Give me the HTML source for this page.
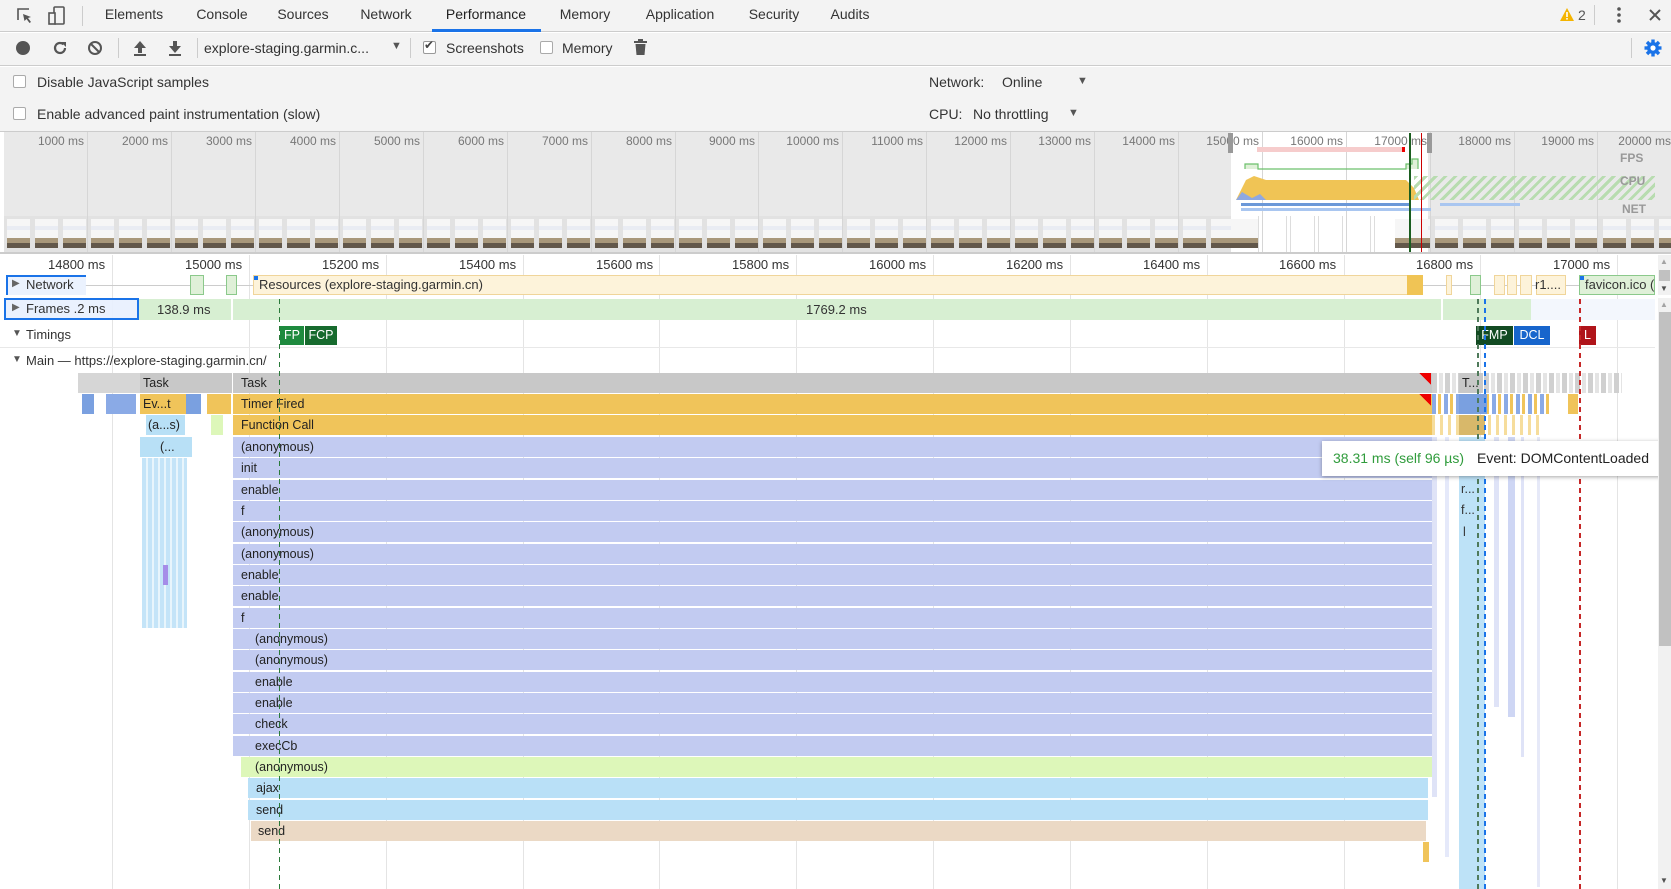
<!DOCTYPE html>
<html><head><meta charset="utf-8"><style>
*{box-sizing:border-box;margin:0;padding:0}
body{width:1671px;height:889px;overflow:hidden;background:#fff;font-family:"Liberation Sans",Arial,sans-serif;font-size:13px;color:#333;position:relative}
.a{position:absolute}
.t{position:absolute;white-space:nowrap}
.tab{position:absolute;top:6px;font-size:14px;color:#333;transform:translateX(-50%)}
.cb{position:absolute;width:13px;height:13px;border:1px solid #aaa;border-radius:2px;background:#fff}
.r{position:absolute;height:20px;font-size:12.5px;line-height:20px;color:#222;overflow:hidden;white-space:nowrap}
.gl{position:absolute;top:255px;bottom:0;width:1px;background:#e4e4e4}
.og{position:absolute;top:132px;height:121px;width:1px;background:#d6d6d6}
.ot{position:absolute;top:134px;font-size:12px;color:#777;text-align:right;width:80px}
</style></head><body>
<!-- tab bar -->
<div class="a" style="left:0;top:0;width:1671px;height:32px;background:#f3f3f3;border-bottom:1px solid #ccc"></div>
<svg class="a" style="left:15px;top:6px" width="20" height="20" viewBox="0 0 20 20"><path d="M3 14V3h11" fill="none" stroke="#555" stroke-width="1.6"/><path d="M8 8l8 3-3 1 3 4-1.5 1-3-4-2 2z" fill="#555"/></svg>
<svg class="a" style="left:46px;top:5px" width="22" height="22" viewBox="0 0 22 22"><rect x="8" y="2" width="10" height="17" rx="1" fill="none" stroke="#555" stroke-width="1.6"/><rect x="3" y="8" width="6" height="11" fill="#f3f3f3" stroke="#555" stroke-width="1.6"/></svg>
<div class="a" style="left:82px;top:6px;width:1px;height:20px;background:#ccc"></div>
<div class="tab" style="left:134px">Elements</div>
<div class="tab" style="left:222px">Console</div>
<div class="tab" style="left:303px">Sources</div>
<div class="tab" style="left:386px">Network</div>
<div class="tab" style="left:486px;color:#222">Performance</div>
<div class="a" style="left:432px;top:29px;width:109px;height:3px;background:#1a73e8"></div>
<div class="tab" style="left:585px">Memory</div>
<div class="tab" style="left:680px">Application</div>
<div class="tab" style="left:774px">Security</div>
<div class="tab" style="left:850px">Audits</div>
<svg class="a" style="left:1560px;top:8px" width="14" height="13" viewBox="0 0 14 13"><path d="M7 0L14 13H0z" fill="#f4b400"/><rect x="6.2" y="4" width="1.6" height="5" fill="#fff"/><rect x="6.2" y="10" width="1.6" height="1.6" fill="#fff"/></svg>
<div class="t" style="left:1578px;top:7px;font-size:14px;color:#555">2</div>
<div class="a" style="left:1594px;top:5px;width:1px;height:20px;background:#ccc"></div>
<svg class="a" style="left:1615px;top:6px" width="8" height="20"><circle cx="4" cy="3" r="1.8" fill="#555"/><circle cx="4" cy="9" r="1.8" fill="#555"/><circle cx="4" cy="15" r="1.8" fill="#555"/></svg>
<svg class="a" style="left:1648px;top:8px" width="14" height="14"><path d="M2 2L12 12M12 2L2 12" stroke="#555" stroke-width="2"/></svg>
<!-- toolbar -->
<div class="a" style="left:0;top:33px;width:1671px;height:33px;background:#f3f3f3;border-bottom:1px solid #ccc"></div>
<div class="a" style="left:16px;top:41px;width:14px;height:14px;border-radius:50%;background:#555"></div>
<svg class="a" style="left:52px;top:40px" width="16" height="16" viewBox="0 0 16 16"><path d="M13 8a5 5 0 1 1-1.5-3.6" fill="none" stroke="#555" stroke-width="2.2"/><path d="M9 2h5v5z" fill="#555"/></svg>
<svg class="a" style="left:87px;top:40px" width="16" height="16" viewBox="0 0 16 16"><circle cx="8" cy="8" r="6" fill="none" stroke="#555" stroke-width="2"/><path d="M4 4l8 8" stroke="#555" stroke-width="2"/></svg>
<div class="a" style="left:118px;top:38px;width:1px;height:20px;background:#ccc"></div>
<svg class="a" style="left:133px;top:40px" width="14" height="16" viewBox="0 0 14 16"><path d="M7 1L13 8H9v5H5V8H1z" fill="#555"/><rect x="1" y="14" width="12" height="2" fill="#555"/></svg>
<svg class="a" style="left:168px;top:40px" width="14" height="16" viewBox="0 0 14 16"><path d="M7 13L13 6H9V1H5v5H1z" fill="#555"/><rect x="1" y="14" width="12" height="2" fill="#555"/></svg>
<div class="a" style="left:197px;top:38px;width:1px;height:20px;background:#ccc"></div>
<div class="t" style="left:204px;top:40px;font-size:14px;color:#333">explore-staging.garmin.c...</div>
<div class="t" style="left:391px;top:40px;font-size:11px;color:#555">▼</div>
<div class="a" style="left:410px;top:38px;width:1px;height:20px;background:#ccc"></div>
<div class="cb" style="left:423px;top:41px;border-color:#999"></div><div class="t" style="left:424px;top:38px;font-size:12px;color:#444">✔</div>
<div class="t" style="left:446px;top:40px;font-size:14px">Screenshots</div>
<div class="cb" style="left:540px;top:41px"></div>
<div class="t" style="left:562px;top:40px;font-size:14px">Memory</div>
<svg class="a" style="left:634px;top:39px" width="13" height="16" viewBox="0 0 13 16"><rect x="0" y="2" width="13" height="2" fill="#555"/><rect x="4" y="0" width="5" height="2" fill="#555"/><path d="M1.5 5h10l-1 11h-8z" fill="#555"/></svg>
<div class="a" style="left:1631px;top:38px;width:1px;height:20px;background:#ccc"></div>
<svg class="a" style="left:1644px;top:39px" width="18" height="18" viewBox="0 0 18 18"><g fill="#1a73e8"><circle cx="9" cy="9" r="6"/><rect x="7.3" y="0.5" width="3.4" height="17"/><rect x="0.5" y="7.3" width="17" height="3.4"/><rect x="7.3" y="0.5" width="3.4" height="17" transform="rotate(45 9 9)"/><rect x="7.3" y="0.5" width="3.4" height="17" transform="rotate(-45 9 9)"/></g><circle cx="9" cy="9" r="2.6" fill="#fff"/></svg>
<!-- settings -->
<div class="a" style="left:0;top:67px;width:1671px;height:65px;background:#f3f3f3;border-bottom:1px solid #ccc"></div>
<div class="cb" style="left:13px;top:75px"></div>
<div class="t" style="left:37px;top:74px;font-size:14px">Disable JavaScript samples</div>
<div class="cb" style="left:13px;top:107px"></div>
<div class="t" style="left:37px;top:106px;font-size:14px">Enable advanced paint instrumentation (slow)</div>
<div class="t" style="left:929px;top:74px;font-size:14px">Network:</div>
<div class="t" style="left:1002px;top:74px;font-size:14px">Online</div>
<div class="t" style="left:1077px;top:75px;font-size:11px;color:#555">▼</div>
<div class="t" style="left:929px;top:106px;font-size:14px">CPU:</div>
<div class="t" style="left:973px;top:106px;font-size:14px">No throttling</div>
<div class="t" style="left:1068px;top:107px;font-size:11px;color:#555">▼</div>
<!-- overview -->
<div class="a" style="left:4px;top:132px;width:1667px;height:121px;background:#e9e9e9"></div>
<div class="a" style="left:1231px;top:132px;width:197px;height:121px;background:#fff"></div>
<div class="a" style="left:4px;top:216px;width:1667px;height:37px;background:repeating-linear-gradient(to right,#e2e2e2 0 3px,transparent 3px 26px,#e2e2e2 26px 28px),linear-gradient(to bottom,#e2e2e2 0 3px,#f6f6f6 3px 10px,#e9ecf3 10px 14px,#f6f6f6 14px 22px,#a8977a 22px 27px,#62574a 27px 32px,#e2e2e2 32px)"></div>
<div class="a" style="left:1231px;top:216px;width:197px;height:37px;background:repeating-linear-gradient(to right,#fff 0 3px,#ddd 3px 4px,#fff 4px 27px,#ddd 27px 28px)"></div>
<div class="a" style="left:1231px;top:216px;width:27px;height:37px;background:linear-gradient(to bottom,#fff 0 3px,#f6f6f6 3px 22px,#a8977a 22px 27px,#62574a 27px 32px,#fff 32px)"></div>
<div class="a" style="left:1395px;top:216px;width:33px;height:37px;background:linear-gradient(to bottom,#fff 0 3px,#f6f6f6 3px 22px,#a8977a 22px 27px,#62574a 27px 32px,#fff 32px)"></div>
<div class="og" style="left:87px"></div><div class="og" style="left:171px"></div><div class="og" style="left:255px"></div><div class="og" style="left:339px"></div><div class="og" style="left:423px"></div><div class="og" style="left:507px"></div><div class="og" style="left:591px"></div><div class="og" style="left:675px"></div><div class="og" style="left:758px"></div><div class="og" style="left:842px"></div><div class="og" style="left:926px"></div><div class="og" style="left:1010px"></div><div class="og" style="left:1094px"></div><div class="og" style="left:1178px"></div><div class="og" style="left:1262px"></div><div class="og" style="left:1346px"></div><div class="og" style="left:1430px"></div><div class="og" style="left:1514px"></div><div class="og" style="left:1597px"></div>
<div class="ot" style="left:4px">1000 ms</div><div class="ot" style="left:88px">2000 ms</div><div class="ot" style="left:172px">3000 ms</div><div class="ot" style="left:256px">4000 ms</div><div class="ot" style="left:340px">5000 ms</div><div class="ot" style="left:424px">6000 ms</div><div class="ot" style="left:508px">7000 ms</div><div class="ot" style="left:592px">8000 ms</div><div class="ot" style="left:675px">9000 ms</div><div class="ot" style="left:759px">10000 ms</div><div class="ot" style="left:843px">11000 ms</div><div class="ot" style="left:927px">12000 ms</div><div class="ot" style="left:1011px">13000 ms</div><div class="ot" style="left:1095px">14000 ms</div><div class="ot" style="left:1179px">15000 ms</div><div class="ot" style="left:1263px">16000 ms</div><div class="ot" style="left:1347px">17000 ms</div><div class="ot" style="left:1431px">18000 ms</div><div class="ot" style="left:1514px">19000 ms</div><div class="ot" style="left:1591px">20000 ms</div>
<div class="a" style="left:1228px;top:133px;width:5px;height:20px;background:#999"></div>
<div class="a" style="left:1427px;top:133px;width:5px;height:20px;background:#999"></div>
<div class="a" style="left:1257px;top:147px;width:147px;height:5px;background:#f6cccc"></div>
<div class="a" style="left:1402px;top:147px;width:3px;height:5px;background:#e00"></div>
<svg class="a" style="left:1231px;top:156px" width="200" height="100"><path d="M14 13V8h13v5h148v-5h6v-5h6v10" fill="#dff0d8" stroke="#6cc06c" stroke-width="1.2"/><path d="M5 44l10-20 8-4 12 4h140l8 8 5 12z" fill="#f0c455"/><path d="M5 44l6-8 10 6 8-4 6 6z" fill="#8fa8e0"/><rect x="10" y="47" width="168" height="3" fill="#6b98d8"/><rect x="10" y="52" width="196" height="3" fill="#a9c6f0"/></svg>
<div class="a" style="left:1414px;top:176px;width:241px;height:24px;background:repeating-linear-gradient(135deg,#b8dcb0 0 3px,transparent 3px 7px)"></div>
<div class="a" style="left:1440px;top:203px;width:80px;height:3px;background:#a9c6f0"></div>
<div class="t" style="left:1620px;top:151px;font-size:12px;font-weight:bold;color:#999">FPS</div>
<div class="t" style="left:1620px;top:174px;font-size:12px;font-weight:bold;color:#999">CPU</div>
<div class="t" style="left:1622px;top:202px;font-size:12px;font-weight:bold;color:#999">NET</div>
<div class="a" style="left:1409px;top:133px;width:2px;height:120px;background:#1b5e20"></div>
<div class="a" style="left:1421px;top:133px;width:1px;height:120px;background:#c00"></div>
<div class="a" style="left:0;top:252px;width:1671px;height:2px;background:#ccc"></div>
<!-- flame ruler & grid -->
<div class="gl" style="left:112px"></div><div class="gl" style="left:249px"></div><div class="gl" style="left:386px"></div><div class="gl" style="left:523px"></div><div class="gl" style="left:659px"></div><div class="gl" style="left:796px"></div><div class="gl" style="left:933px"></div><div class="gl" style="left:1070px"></div><div class="gl" style="left:1207px"></div><div class="gl" style="left:1344px"></div><div class="gl" style="left:1480px"></div><div class="gl" style="left:1617px"></div>
<div class="t" style="left:48px;top:257px;font-size:13px">14800 ms</div><div class="t" style="left:185px;top:257px;font-size:13px">15000 ms</div><div class="t" style="left:322px;top:257px;font-size:13px">15200 ms</div><div class="t" style="left:459px;top:257px;font-size:13px">15400 ms</div><div class="t" style="left:596px;top:257px;font-size:13px">15600 ms</div><div class="t" style="left:732px;top:257px;font-size:13px">15800 ms</div><div class="t" style="left:869px;top:257px;font-size:13px">16000 ms</div><div class="t" style="left:1006px;top:257px;font-size:13px">16200 ms</div><div class="t" style="left:1143px;top:257px;font-size:13px">16400 ms</div><div class="t" style="left:1279px;top:257px;font-size:13px">16600 ms</div><div class="t" style="left:1416px;top:257px;font-size:13px">16800 ms</div><div class="t" style="left:1553px;top:257px;font-size:13px">17000 ms</div>
<!-- network row -->
<div class="a" style="left:85px;top:285px;width:1530px;height:1px;background:#ccc"></div>
<div class="a" style="left:190px;top:275px;width:14px;height:20px;background:#dff0d8;border:1px solid #8bc98b"></div>
<div class="a" style="left:226px;top:275px;width:11px;height:20px;background:#dff0d8;border:1px solid #8bc98b"></div>
<div class="a" style="left:253px;top:275px;width:1170px;height:20px;background:#fdf3da;border:1px solid #f0d59a"></div>
<div class="a" style="left:254px;top:276px;width:4px;height:4px;background:#1a73e8"></div>
<div class="t" style="left:259px;top:277px;font-size:13px;color:#333">Resources (explore-staging.garmin.cn)</div>
<div class="a" style="left:1407px;top:275px;width:16px;height:20px;background:#f0c455"></div>
<div class="a" style="left:1446px;top:275px;width:6px;height:20px;background:#fdf3da;border:1px solid #f0d59a"></div>
<div class="a" style="left:1470px;top:275px;width:11px;height:20px;background:#dff0d8;border:1px solid #8bc98b"></div>
<div class="a" style="left:1494px;top:275px;width:11px;height:20px;background:#fdf3da;border:1px solid #f0d59a"></div>
<div class="a" style="left:1507px;top:275px;width:10px;height:20px;background:#fdf3da;border:1px solid #f0d59a"></div>
<div class="a" style="left:1520px;top:275px;width:12px;height:20px;background:#fdf3da;border:1px solid #f0d59a"></div>
<div class="a" style="left:1536px;top:275px;width:30px;height:20px;background:#fdf3da;border:1px solid #f0d59a"></div>
<div class="t" style="left:1535px;top:277px;font-size:13px">r1....</div>
<div class="a" style="left:1579px;top:275px;width:76px;height:20px;background:#dff0d8;border:1px solid #8bc98b"></div>
<div class="a" style="left:1580px;top:276px;width:4px;height:4px;background:#1a73e8"></div>
<div class="t" style="left:1585px;top:277px;font-size:13px">favicon.ico (</div>
<div class="a" style="left:6px;top:275px;width:80px;height:20px;background:rgba(232,240,254,.85);border:2px solid #1a73e8;border-right:none;border-bottom:none"></div>
<div class="t" style="left:12px;top:278px;font-size:10px;color:#666">▶</div>
<div class="t" style="left:26px;top:277px;font-size:13px">Network</div>
<!-- frames -->
<div class="a" style="left:139px;top:299px;width:92px;height:21px;background:#d7efd2"></div>
<div class="a" style="left:233px;top:299px;width:1208px;height:21px;background:#d7efd2"></div>
<div class="a" style="left:1443px;top:299px;width:88px;height:21px;background:#d7efd2"></div>
<div class="a" style="left:1531px;top:299px;width:124px;height:21px;background:#f3f7fd"></div>
<div class="t" style="left:157px;top:302px;font-size:13px">138.9 ms</div>
<div class="t" style="left:806px;top:302px;font-size:13px">1769.2 ms</div>
<div class="a" style="left:4px;top:298px;width:135px;height:22px;background:rgba(232,240,254,.9);border:2px solid #1a73e8"></div>
<div class="t" style="left:12px;top:302px;font-size:10px;color:#666">▶</div>
<div class="t" style="left:26px;top:301px;font-size:13px">Frames .2 ms</div>
<!-- timings -->
<div class="a" style="left:0;top:347px;width:1655px;height:1px;background:#e8e8e8"></div>
<div class="t" style="left:12px;top:328px;font-size:10px;color:#555">▼</div>
<div class="t" style="left:26px;top:327px;font-size:13px">Timings</div>
<div class="a" style="left:280px;top:326px;width:24px;height:19px;background:#1e8a3e;color:#fff;font-size:12.5px;line-height:19px;text-align:center">FP</div>
<div class="a" style="left:305px;top:326px;width:32px;height:19px;background:#176b2e;color:#fff;font-size:12.5px;line-height:19px;text-align:center">FCP</div>
<div class="a" style="left:1476px;top:326px;width:37px;height:19px;background:#124a22;color:#fff;font-size:12.5px;line-height:19px;text-align:center">FMP</div>
<div class="a" style="left:1514px;top:326px;width:36px;height:19px;background:#1765cc;color:#fff;font-size:12.5px;line-height:19px;text-align:center">DCL</div>
<div class="a" style="left:1579px;top:326px;width:17px;height:19px;background:#b0141a;color:#fff;font-size:12.5px;line-height:19px;text-align:center">L</div>
<!-- main -->
<div class="t" style="left:12px;top:354px;font-size:10px;color:#555">▼</div>
<div class="t" style="left:26px;top:353px;font-size:13px">Main — https://explore-staging.garmin.cn/</div>
<!-- left small bars -->
<div class="a" style="left:78px;top:373px;width:62px;height:20px;background:#d6d6d6"></div>
<div class="r" style="left:140px;top:373px;width:92px;background:#c8c8c8;padding-left:3px">Task</div>
<div class="a" style="left:82px;top:394px;width:12px;height:20px;background:#7aa0e0"></div>
<div class="a" style="left:106px;top:394px;width:30px;height:20px;background:#8aaae6"></div>
<div class="r" style="left:140px;top:394px;width:46px;background:#f0c45a;padding-left:3px">Ev...t</div>
<div class="a" style="left:186px;top:394px;width:15px;height:20px;background:#7aa0e0"></div>
<div class="a" style="left:207px;top:394px;width:24px;height:20px;background:#f0c45a"></div>
<div class="r" style="left:146px;top:415px;width:39px;background:#b8e0f6;padding-left:2px">(a...s)</div>
<div class="a" style="left:211px;top:415px;width:12px;height:20px;background:#ddf7b9"></div>
<div class="r" style="left:140px;top:437px;width:52px;background:#b8e0f6;padding-left:20px">(...</div>
<div class="a" style="left:142px;top:458px;width:45px;height:170px;background:repeating-linear-gradient(to right,#c4e4f8 0 4px,#e8f5fc 4px 6px)"></div>
<div class="a" style="left:163px;top:565px;width:5px;height:20px;background:#a58de8"></div>
<!-- main columns -->
<div class="r" style="left:233px;top:373px;width:1199px;background:#c8c8c8;padding-left:8px">Task</div>
<div class="r" style="left:233px;top:394px;width:1199px;background:#f0c45a;padding-left:8px">Timer Fired</div>
<div class="r" style="left:233px;top:415px;width:1199px;background:#f0c45a;padding-left:8px">Function Call</div>
<div class="r" style="left:233px;top:437px;width:1199px;background:#c2cbf1;padding-left:8px">(anonymous)</div>
<div class="r" style="left:233px;top:458px;width:1199px;background:#c2cbf1;padding-left:8px">init</div>
<div class="r" style="left:233px;top:480px;width:1199px;background:#c2cbf1;padding-left:8px">enable</div>
<div class="r" style="left:233px;top:501px;width:1199px;background:#c2cbf1;padding-left:8px">f</div>
<div class="r" style="left:233px;top:522px;width:1199px;background:#c2cbf1;padding-left:8px">(anonymous)</div>
<div class="r" style="left:233px;top:544px;width:1199px;background:#c2cbf1;padding-left:8px">(anonymous)</div>
<div class="r" style="left:233px;top:565px;width:1199px;background:#c2cbf1;padding-left:8px">enable</div>
<div class="r" style="left:233px;top:586px;width:1199px;background:#c2cbf1;padding-left:8px">enable</div>
<div class="r" style="left:233px;top:608px;width:1199px;background:#c2cbf1;padding-left:8px">f</div>
<div class="r" style="left:233px;top:629px;width:1199px;background:#c2cbf1;padding-left:22px">(anonymous)</div>
<div class="r" style="left:233px;top:650px;width:1199px;background:#c2cbf1;padding-left:22px">(anonymous)</div>
<div class="r" style="left:233px;top:672px;width:1199px;background:#c2cbf1;padding-left:22px">enable</div>
<div class="r" style="left:233px;top:693px;width:1199px;background:#c2cbf1;padding-left:22px">enable</div>
<div class="r" style="left:233px;top:714px;width:1199px;background:#c2cbf1;padding-left:22px">check</div>
<div class="r" style="left:233px;top:736px;width:1199px;background:#c2cbf1;padding-left:22px">execCb</div>
<div class="r" style="left:241px;top:757px;width:1191px;background:#ddf7b9;padding-left:14px">(anonymous)</div>
<div class="r" style="left:248px;top:778px;width:1180px;background:#b9e0f7;padding-left:8px">ajax</div>
<div class="r" style="left:248px;top:800px;width:1180px;background:#b9e0f7;padding-left:8px">send</div>
<div class="r" style="left:251px;top:821px;width:1175px;background:#ebd9c5;padding-left:7px">send</div>
<div class="a" style="left:1423px;top:842px;width:6px;height:20px;background:#f0c45a"></div>
<div class="a" style="left:1419px;top:373px;width:12px;height:12px;background:linear-gradient(225deg,#e00 50%,transparent 50%)"></div>
<div class="a" style="left:1419px;top:394px;width:12px;height:12px;background:linear-gradient(225deg,#e00 50%,transparent 50%)"></div>
<!-- right cluster -->
<div class="a" style="left:1432px;top:373px;width:190px;height:20px;background:repeating-linear-gradient(to right,#d0d0d0 0 5px,#fff 5px 7px,#e4e4e4 7px 11px,#fff 11px 13px)"></div>
<div class="r" style="left:1459px;top:373px;width:24px;background:#c8c8c8;padding-left:3px">T...</div>
<div class="a" style="left:1432px;top:394px;width:120px;height:20px;background:repeating-linear-gradient(to right,#8aaae6 0 4px,#fff 4px 6px,#f0c45a 6px 9px,#fff 9px 12px)"></div>
<div class="a" style="left:1459px;top:394px;width:28px;height:20px;background:#7aa0e0"></div>
<div class="a" style="left:1568px;top:394px;width:10px;height:20px;background:#f0c45a"></div>
<div class="a" style="left:1432px;top:415px;width:110px;height:20px;background:repeating-linear-gradient(to right,#f6dd9c 0 3px,#fff 3px 8px)"></div>
<div class="a" style="left:1459px;top:415px;width:26px;height:20px;background:#d8b86a"></div>
<div class="a" style="left:1459px;top:437px;width:26px;height:452px;background:#bde2f7"></div>
<div class="a" style="left:1432px;top:437px;width:5px;height:360px;background:#dfe3f7"></div>
<div class="a" style="left:1445px;top:437px;width:4px;height:420px;background:#e5e9fa"></div>
<div class="a" style="left:1494px;top:437px;width:5px;height:270px;background:#dfe3f7"></div>
<div class="a" style="left:1508px;top:437px;width:7px;height:280px;background:#ced6f4"></div>
<div class="a" style="left:1521px;top:437px;width:3px;height:320px;background:#dfe3f7"></div>
<div class="a" style="left:1537px;top:437px;width:3px;height:450px;background:#e6e9f8"></div>
<div class="t" style="left:1461px;top:482px;font-size:12.5px">r...</div>
<div class="t" style="left:1461px;top:503px;font-size:12.5px">f...</div>
<div class="t" style="left:1463px;top:525px;font-size:12.5px">l</div>
<!-- dashed lines -->
<div class="a" style="left:279px;top:299px;width:1px;height:590px;background:repeating-linear-gradient(to bottom,#2a7a3a 0 5px,transparent 5px 9px)"></div>
<div class="a" style="left:1477px;top:299px;width:2px;height:590px;background:repeating-linear-gradient(to bottom,#4f7a5a 0 5px,transparent 5px 9px)"></div>
<div class="a" style="left:1484px;top:299px;width:2px;height:590px;background:repeating-linear-gradient(to bottom,#1a73e8 0 5px,transparent 5px 9px)"></div>
<div class="a" style="left:1579px;top:299px;width:2px;height:590px;background:repeating-linear-gradient(to bottom,#c62828 0 5px,transparent 5px 9px)"></div>
<!-- tooltip -->
<div class="a" style="left:1322px;top:441px;width:349px;height:35px;background:#fff;box-shadow:0 1px 4px rgba(0,0,0,.35)"></div>
<div class="t" style="left:1333px;top:450px;font-size:14px;color:#309c3c">38.31 ms (self 96 µs)</div>
<div class="t" style="left:1477px;top:450px;font-size:14px;color:#222">Event: DOMContentLoaded</div>
<!-- scrollbars -->
<div class="a" style="left:1658px;top:255px;width:13px;height:40px;background:#f1f1f1"></div>
<div class="a" style="left:1659px;top:270px;width:11px;height:11px;background:#c1c1c1"></div>
<div class="t" style="left:1660px;top:257px;font-size:8px;color:#a3a3a3">▲</div>
<div class="t" style="left:1660px;top:284px;font-size:8px;color:#505050">▼</div>
<div class="a" style="left:1658px;top:298px;width:13px;height:591px;background:#f1f1f1"></div>
<div class="t" style="left:1660px;top:300px;font-size:8px;color:#a3a3a3">▲</div>
<div class="a" style="left:1659px;top:312px;width:12px;height:334px;background:#c1c1c1"></div>
<div class="t" style="left:1660px;top:876px;font-size:8px;color:#505050">▼</div>
</body></html>
